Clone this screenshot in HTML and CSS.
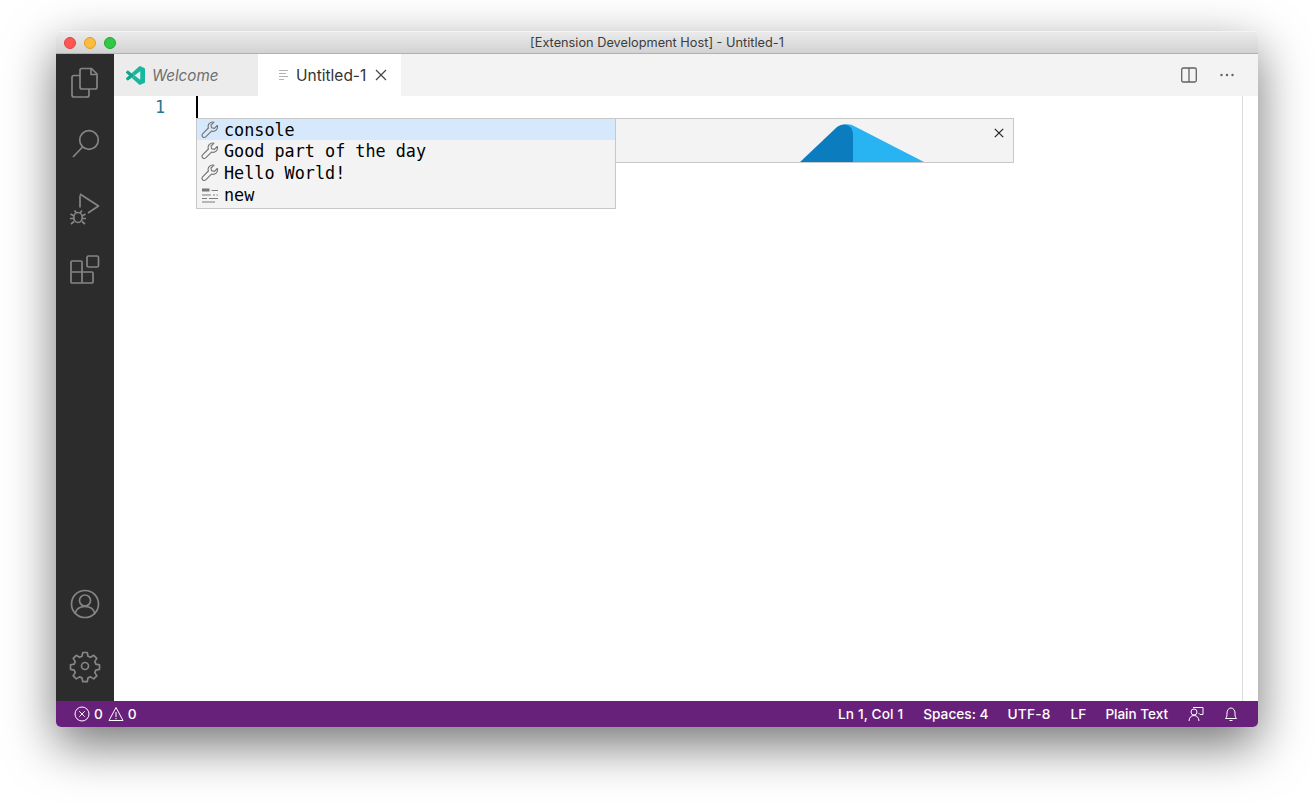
FILE: index.html
```html
<!DOCTYPE html>
<html lang="en">
<head>
<meta charset="utf-8">
<title>Extension Development Host</title>
<link rel="stylesheet" href="styles.css">
</head>
<body>
<div class="window">
  <header class="titlebar">
    <div class="lights"><span class="light red"></span><span class="light yellow"></span><span class="light green"></span></div>
    <div class="title">[Extension Development Host] - Untitled-1</div>
  </header>
  <div class="workbench">
    <nav class="activity">
      <div class="activity-top">
        <svg class="act files" width="58" height="62" viewBox="0 0 58 62"><path d="M24 21.500h-6a2 2 0 0 0-2 2V41a2 2 0 0 0 2 2H31a2 2 0 0 0 2-2v-6"/><path d="M26 14.500h9.500l5.500 5.500v13a2 2 0 0 1-2 2H26a2 2 0 0 1-2-2V16.500a2 2 0 0 1 2-2z"/><path d="M35 15v5.500h5.500"/></svg>
        <svg class="act" width="58" height="62" viewBox="0 0 58 62"><circle cx="33" cy="24" r="9.300"/><path d="M26.500 31 17 41"/></svg>
        <svg class="act" width="58" height="62" viewBox="0 0 58 62"><path d="M24 17.500v12M24 16l18.500 12L32 35"/><ellipse cx="22" cy="39.500" rx="4.200" ry="5"/><path d="M18.500 32.500l2 2.500M26 32.500l-2 2.500M14.500 36l3.500 2M29.500 36l-3.500 2M14 40.500h4M26 40.500h4M15 46l3-2.500M29 46l-3-2.500"/></svg>
        <svg class="act" width="58" height="62" viewBox="0 0 58 62"><path d="M16 21h9a1 1 0 0 1 1 1v10h10a1 1 0 0 1 1 1v9a1 1 0 0 1-1 1H16a1 1 0 0 1-1-1V22a1 1 0 0 1 1-1zM15 32h11v11"/><rect x="31" y="16" width="11.500" height="11" rx="1.500"/></svg>
      </div>
      <div class="activity-bottom">
        <svg class="act" width="58" height="62" viewBox="0 0 58 62"><circle cx="29" cy="31" r="13.500"/><circle cx="29" cy="27.500" r="5.500"/><path d="M19 41c1-5 5-7.500 10-7.500s9 2.500 10 7.500"/></svg>
        <svg class="act" width="58" height="62" viewBox="0 0 58 62"><circle cx="29" cy="31" r="3.500"/><path d="M26.800 17.500h4.400l.8 3.700 2.500 1.100 3.200-2 3.100 3.100-2 3.200 1 2.500 3.700.8v4.400l-3.700.8-1 2.500 2 3.200-3.100 3.100-3.200-2-2.500 1-.8 3.800h-4.400l-.8-3.800-2.500-1-3.200 2-3.100-3.100 2-3.200-1-2.500-3.700-.8v-4.400l3.700-.8 1-2.500-2-3.200 3.100-3.100 3.200 2 2.500-1.100z"/></svg>
      </div>
    </nav>
    <main class="main">
      <div class="tabs">
        <div class="tab tab-welcome">
          <svg class="vscode" width="19" height="19" viewBox="0 0 24 24"><path class="vs-dark" d="M7.050 9.130 2.930 6a1 1 0 0 0-1.280.06L.33 7.260a1 1 0 0 0 0 1.480L3.900 12 .33 15.260a1 1 0 0 0 0 1.480l1.320 1.200a1 1 0 0 0 1.280.06l4.120-3.130L10.830 12z"/><path class="vs-mid" d="M23.150 2.590 18.210.21a1.490 1.490 0 0 0-1.710.29L7.050 9.130 10.830 12l7.170-5.450v10.900L10.830 12l-3.780 2.870 9.460 8.630a1.490 1.490 0 0 0 1.700.29l4.940-2.380A1.500 1.500 0 0 0 24 20.060V3.940a1.500 1.500 0 0 0-.85-1.350z"/></svg>
          <span class="tab-name italic">Welcome</span>
        </div>
        <div class="tab tab-active">
          <svg class="file-lines" width="12" height="12" viewBox="0 0 12 12"><path d="M1 1.500h9M1 4.500h7M1 7.500h9M1 10.500h5"/></svg>
          <span class="tab-name">Untitled-1</span>
          <svg class="x" width="12" height="12" viewBox="0 0 12 12"><path d="M1 1l10 10M11 1 1 11"/></svg>
        </div>
        <div class="tab-actions">
          <svg class="split" width="16" height="16" viewBox="0 0 16 16"><rect x=".7" y="1" width="14.600" height="14" rx="1.500"/><path d="M8 1v14"/></svg>
          <svg class="more" width="14" height="4" viewBox="0 0 14 4"><circle cx="1.500" cy="2" r="1.200"/><circle cx="7" cy="2" r="1.200"/><circle cx="12.500" cy="2" r="1.200"/></svg>
        </div>
      </div>
      <div class="editor">
        <div class="gutter"><span class="line-no">1</span></div>
        <div class="content">
          <div class="cursor"></div>
          <div class="suggest">
            <ul class="suggest-list">
              <li class="item selected"><svg class="wrench" width="18" height="18" viewBox="0 0 18 18"><path d="M13 1.200a4.500 4.500 0 0 0-5.600 5.800L1.600 12.800a2.200 2.200 0 0 0 3.100 3.100l5.800-5.800a4.500 4.500 0 0 0 5.800-5.600l-2.900 2.900-2.800-.6-.6-2.800z"/></svg><span>console</span></li>
              <li class="item"><svg class="wrench" width="18" height="18" viewBox="0 0 18 18"><path d="M13 1.200a4.500 4.500 0 0 0-5.600 5.800L1.600 12.800a2.200 2.200 0 0 0 3.100 3.100l5.800-5.800a4.500 4.500 0 0 0 5.800-5.600l-2.900 2.900-2.800-.6-.6-2.800z"/></svg><span>Good part of the day</span></li>
              <li class="item"><svg class="wrench" width="18" height="18" viewBox="0 0 18 18"><path d="M13 1.200a4.500 4.500 0 0 0-5.600 5.800L1.600 12.800a2.200 2.200 0 0 0 3.100 3.100l5.800-5.800a4.500 4.500 0 0 0 5.800-5.600l-2.900 2.900-2.800-.6-.6-2.800z"/></svg><span>Hello World!</span></li>
              <li class="item"><svg class="word" width="18" height="18" viewBox="0 0 18 18"><path class="word-box" d="M1 2.500h7.500v3H1z"/><path d="M10.500 4.500H17M1 9h9M12 9h2M15.500 9H17M1 12.500h5M8 12.500h9M1 16h13"/></svg><span>new</span></li>
            </ul>
            <div class="details">
              <svg class="detail-art" viewBox="0 0 397 43" preserveAspectRatio="none"><path class="art-light" d="M224 7c4-2 8-2.500 12-1l74 38H224z"/><path class="art-dark" d="M183 44l38-36c6-5 16-3 16 8v28z"/></svg>
              <svg class="detail-close" width="10" height="10" viewBox="0 0 10 10"><path d="M.8.8l8.400 8.400M9.200.8.800 9.200"/></svg>
            </div>
          </div>
        </div>
        <div class="ruler"></div>
      </div>
    </main>
  </div>
  <footer class="status">
    <div class="status-left">
      <svg class="st-icon" width="16" height="16" viewBox="0 0 16 16"><circle cx="8" cy="8" r="7"/><path d="M5.300 5.300l5.400 5.400M10.700 5.300l-5.400 5.400"/></svg>
      <span class="count">0</span>
      <svg class="st-icon warn" width="16" height="16" viewBox="0 0 16 16"><path d="M8 1.500 15 14.500H1zM8 6v5M8 12v1.200"/></svg>
      <span class="count">0</span>
    </div>
    <div class="status-right">
      <span class="st-pos">Ln 1, Col 1</span>
      <span>Spaces: 4</span>
      <span class="st-enc">UTF-8</span>
      <span class="st-eol">LF</span>
      <span class="st-lang">Plain Text</span>
      <svg class="st-icon" width="16" height="16" viewBox="0 0 16 16"><circle cx="6" cy="6" r="3"/><path d="M1 15c.3-3.500 2-5.500 5-5.500s4.700 2 5 5.500M5 1.500h10v7h-3M10.500 7l1.500 1.500"/></svg>
      <svg class="st-icon" width="16" height="16" viewBox="0 0 16 16"><path d="M2.500 12.500c1.500-1.500 1.500-3 1.500-5.500s1.500-5 4-5 4 2.500 4 5 0 4 1.500 5.500zM6.500 14.500h3"/></svg>
    </div>
  </footer>
</div>
</body>
</html>
```
FILE: styles.css
```css
* { box-sizing: border-box; }
html, body { margin: 0; height: 807px; overflow: hidden; background: #fff; }
body { padding: 31px 0 0 56px; }

.window {
  width: 1202px;
  height: 696px;
  display: flex;
  flex-direction: column;
  border-radius: 5px;
  background: #fff;
  box-shadow: 0 18px 50px rgba(0,0,0,.55);
  font-family: Inter, "Liberation Sans", sans-serif;
  overflow: hidden;
}

.titlebar {
  height: 23px;
  flex: none;
  display: flex;
  align-items: center;
  justify-content: center;
  position: relative;
  background: linear-gradient(#ebebeb, #d2d2d2);
  border-top: 1px solid #f4f4f4;
  border-bottom: 1px solid #b1b1b1;
}
.lights { position: absolute; left: 8px; top: 5px; display: flex; gap: 8px; }
.light { width: 12px; height: 12px; border-radius: 50%; display: block; }
.red { background: #fc5753; border: 1px solid #e0443e; }
.yellow { background: #fdbc40; border: 1px solid #dea123; }
.green { background: #33c748; border: 1px solid #1aab29; }
.title { font-size: 12.750px; color: #3c3c3c; }

.workbench { flex: 1; min-height: 0; display: flex; }

.activity {
  width: 58px;
  flex: none;
  background: #2c2c2c;
  display: flex;
  flex-direction: column;
  justify-content: space-between;
}
.activity-top, .activity-bottom { display: flex; flex-direction: column; }
.activity-bottom { padding-bottom: 4px; }
.act { display: block; fill: none; stroke: #858585; stroke-width: 1.700; stroke-linejoin: round; }

.main { flex: 1; min-width: 0; display: flex; flex-direction: column; }

.tabs { height: 42px; flex: none; display: flex; background: #f3f3f3; }
.tab { display: flex; align-items: center; height: 100%; }
.tab-welcome { width: 144px; background: #ececec; padding-left: 12px; gap: 7px; }
.tab-active { width: 143px; background: #fff; padding-left: 20px; }
.tab-name { font-size: 15.500px; color: #333; }
.tab-name.italic { font-size: 15.200px; font-style: italic; color: #6f6f6f; }
.vs-dark { fill: #0fa58c; }
.vs-mid { fill: #18b89e; }
.file-lines { fill: none; stroke: #b3b3b3; stroke-width: 1; margin-right: 6px; }
.x { fill: none; stroke: #424242; stroke-width: 1.200; margin-left: 9px; }
.tab-actions { margin-left: auto; display: flex; align-items: center; gap: 23px; padding-right: 24px; }
.split { fill: none; stroke: #616161; stroke-width: 1.300; }
.more { fill: #616161; }

.editor { flex: 1; min-height: 0; display: flex; background: #fff; font-family: "DejaVu Sans Mono", monospace; }
.gutter { width: 82px; flex: none; padding: 0 31px 0 0; text-align: right; }
.line-no { color: #237893; font-size: 16.800px; line-height: 22px; }
.content { flex: 1; position: relative; }
.cursor { width: 2px; height: 22px; background: #000; }
.ruler { width: 16px; flex: none; border-left: 1px solid #dcdcdc; }

.suggest { position: absolute; left: 0; top: 22px; display: flex; align-items: flex-start; }
.suggest-list {
  list-style: none;
  margin: 0;
  padding: 0;
  width: 420px;
  height: 91px;
  background: #f3f3f3;
  border: 1px solid #c8c8c8;
}
.item { height: 22px; display: flex; align-items: center; padding-left: 4px; font-size: 16.800px; color: #000; gap: 5px; }
.selected { background: #d6e9fc; height: 21px; }
.wrench { flex: none; fill: none; stroke: #727272; stroke-width: 1.100; stroke-linejoin: round; }
.word { flex: none; fill: none; stroke: #7c7c7c; stroke-width: 1.200; }
.word-box { fill: #777; stroke: none; }

.details {
  width: 399px;
  height: 45px;
  margin-left: -1px;
  background: #f3f3f3;
  border: 1px solid #c8c8c8;
  position: relative;
}
.detail-art { display: block; width: 100%; height: 100%; }
.art-light { fill: #28b3f3; }
.art-dark { fill: #0b7dbe; }
.detail-close { position: absolute; top: 9px; right: 9px; fill: none; stroke: #222; stroke-width: 1.200; }

.status {
  height: 26px;
  flex: none;
  background: #68217a;
  color: #fff;
  display: flex;
  align-items: center;
  justify-content: space-between;
  font-size: 13.700px;
  font-weight: 500;
  padding: 0 19px 0 18px;
}
.status-left { display: flex; align-items: center; }
.status-left .count { margin: 0 5px 0 4px; }
.status-right { display: flex; align-items: center; gap: 19px; }
.st-pos { margin-right: 1px; letter-spacing: .1px; }
.st-enc { letter-spacing: .2px; }
.st-eol { margin-left: 1px; }
.st-lang { margin-right: 1px; font-size: 13.500px; }
.st-icon { display: block; fill: none; stroke: #fff; stroke-width: 1; }
```
